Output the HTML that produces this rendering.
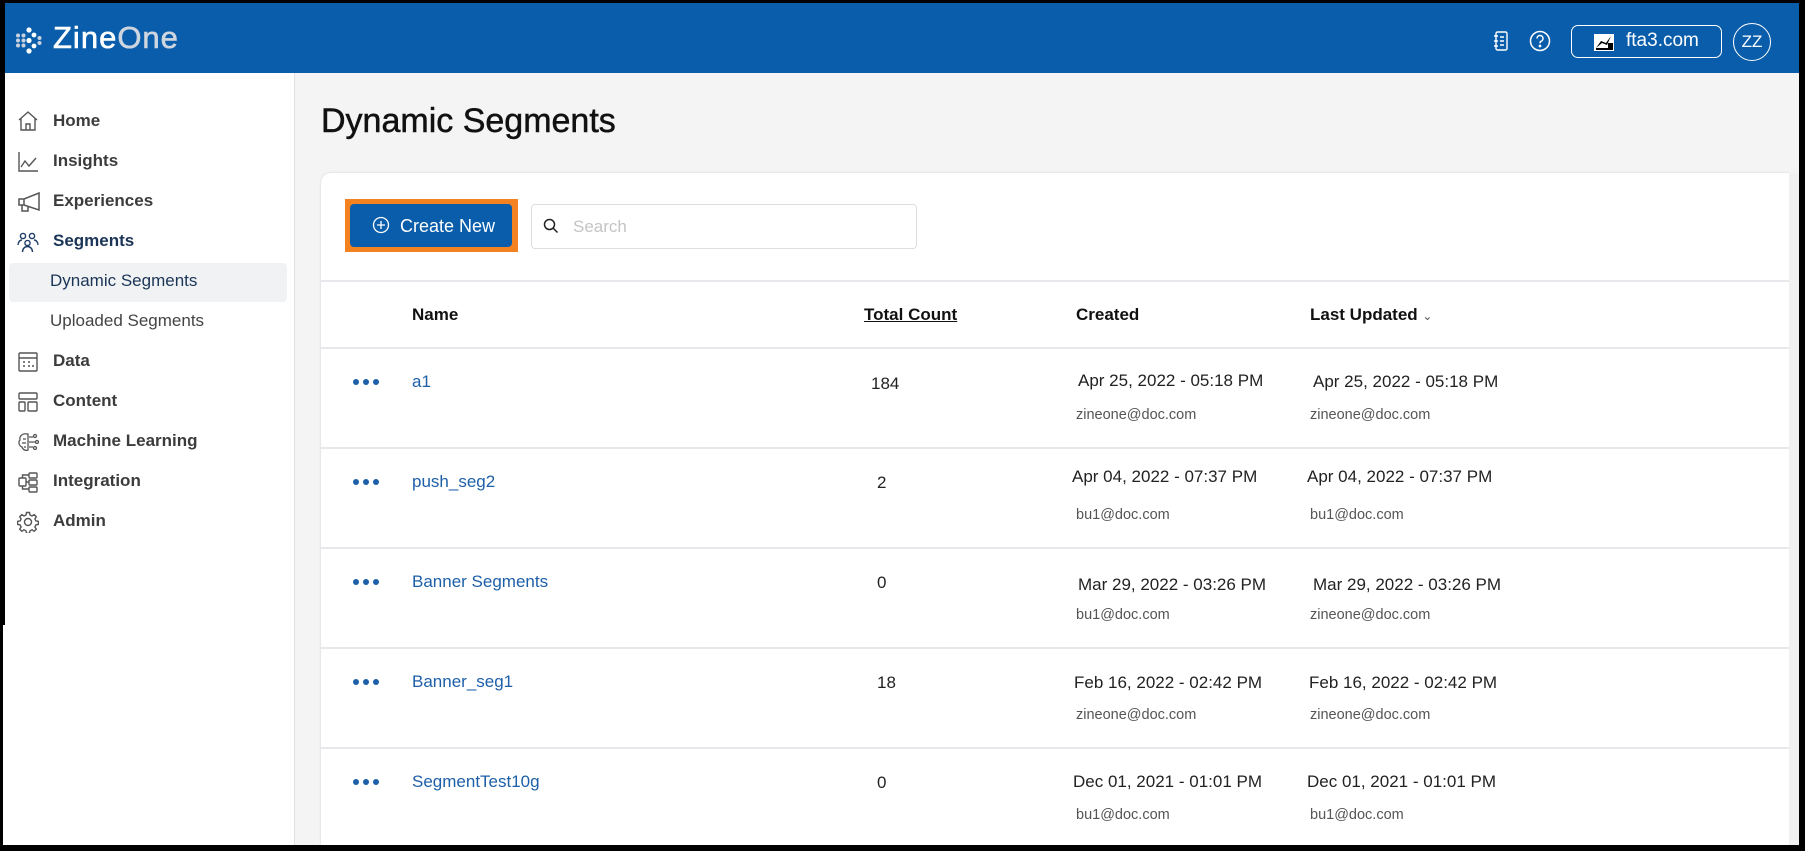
<!DOCTYPE html>
<html><head><meta charset="utf-8"><style>
*{box-sizing:border-box;margin:0;padding:0}
html,body{width:1805px;height:851px;overflow:hidden;background:#fff;font-family:"Liberation Sans",Arial,sans-serif}
.abs{position:absolute}
#hdr{left:0;top:0;width:1805px;height:73px;background:#0a5dab}
#side{left:0;top:73px;width:295px;height:778px;background:#fff;border-right:1px solid #e2e2e2}
#main{left:295px;top:73px;width:1510px;height:778px;background:#f4f4f4}
.nav{position:absolute;left:53px;font-size:17px;font-weight:bold;color:#3c3c3c}
.ic{position:absolute;left:17px;width:22px;height:22px}
.sub{position:absolute;left:50px;font-size:17px;color:#444}
#card{left:321px;top:173px;width:1468px;height:672px;background:#fff;border-radius:10px 0 0 0;box-shadow:0 0 2px rgba(0,0,0,.15)}
.hline{position:absolute;left:321px;width:1468px;height:2px;background:#e6e8ec}
.th{position:absolute;top:305px;font-size:17px;font-weight:bold;color:#111}
.cell{position:absolute;font-size:17px;color:#222}
.nm{position:absolute;left:412px;font-size:17px;color:#1d5fa8}
.em{position:absolute;font-size:14.5px;color:#555}
.dots{position:absolute;left:353px;width:26px;height:6px}
.dots i{position:absolute;top:0;width:6px;height:6px;border-radius:3px;background:#1d5fa8}
</style></head><body>
<div id="hdr" class="abs">
 <svg class="abs" style="left:15px;top:27px" width="28" height="27" viewBox="0 0 28 27">
  <g fill="#fff"><circle cx="14" cy="3" r="2.6"/><circle cx="19" cy="8" r="2.4"/><circle cx="14" cy="13.5" r="2.6"/><circle cx="19" cy="19" r="2.4"/><circle cx="14" cy="24" r="2.6"/></g>
  <g fill="#c9d3e0"><circle cx="3" cy="8.5" r="2"/><circle cx="8.5" cy="8.5" r="2"/><circle cx="3" cy="13.5" r="2"/><circle cx="8.5" cy="13.5" r="2"/><circle cx="3" cy="18.5" r="2"/><circle cx="8.5" cy="18.5" r="2"/><circle cx="24.5" cy="11" r="2"/><circle cx="24.5" cy="16" r="2"/></g>
 </svg>
 <div class="abs" style="left:53px;top:20px;font-size:31px;color:#fff;letter-spacing:1px;-webkit-text-stroke:0.6px #fff">Zine<span style="color:#cfd6df;-webkit-text-stroke:0.6px #cfd6df">One</span></div>
 <svg class="abs" style="left:1493px;top:31px" width="16" height="20" viewBox="0 0 16 20" fill="none" stroke="#fff" stroke-width="1.4"><rect x="3" y="1" width="11" height="18" rx="1.5"/><path d="M1 5h4M1 10h4M1 15h4M7 6h4M7 10h4M7 14h4"/></svg>
 <svg class="abs" style="left:1529px;top:30px" width="22" height="22" viewBox="0 0 22 22" fill="none" stroke="#fff" stroke-width="1.5"><circle cx="11" cy="11" r="9.5"/><path d="M8 8.5a3 3 0 1 1 4 2.8c-.8.4-1 1-1 1.9"/><circle cx="11" cy="16" r=".6" fill="#fff"/></svg>
 <div class="abs" style="left:1571px;top:25px;width:151px;height:33px;border:1.5px solid #fff;border-radius:7px"></div>
 <div class="abs" style="left:1594px;top:34px;width:20px;height:17px;background:#fff"><svg width="20" height="17" viewBox="0 0 20 17"><path d="M2 14l5-7 5 2 5-7-4 9-5-2z" fill="#000"/><rect x="14" y="9" width="5" height="7" fill="#000"/><path d="M2 15h12" stroke="#000" stroke-width="2"/></svg></div>
 <div class="abs" style="left:1626px;top:30px;font-size:19px;color:#fff">fta3.com</div>
 <div class="abs" style="left:1733px;top:23px;width:38px;height:38px;border:1.5px solid #fff;border-radius:50%;color:#fff;font-size:17px;text-align:center;line-height:35px">ZZ</div>
</div>
<div class="abs" style="left:0;top:0;width:1805px;height:3px;background:#000"></div>
<div id="side" class="abs">
 <div class="abs" style="left:9px;top:190px;width:278px;height:39px;background:#f1f2f4;border-radius:4px"></div>
</div>
<svg class="ic" style="top:110px" viewBox="0 0 22 22" fill="none" stroke="#555" stroke-width="1.4"><path d="M2 10L11 2l9 8M4 8.5V20h14V8.5M9 20v-6h4v6"/></svg>
<div class="nav" style="top:111px">Home</div>
<svg class="ic" style="top:151px" viewBox="0 0 22 22" fill="none" stroke="#555" stroke-width="1.4"><path d="M2 1v19h19M4 16l4-6 4 5 7-8"/></svg>
<div class="nav" style="top:151px">Insights</div>
<svg class="ic" style="top:191px;width:25px" viewBox="0 0 25 22" fill="none" stroke="#555" stroke-width="1.5"><path d="M2 8h5l15-6v17L7 14H2zM7 8v6M5 14v6h6v-4"/></svg>
<div class="nav" style="top:191px">Experiences</div>
<svg class="ic" style="top:231px" viewBox="0 0 22 22" fill="none" stroke="#1d3d66" stroke-width="1.4"><circle cx="6" cy="5" r="2.6"/><circle cx="15" cy="5" r="2.6"/><circle cx="10.5" cy="12" r="2.6"/><path d="M1 14c0-3 2-5 4-5M21 14c0-3-2-5-4-5M5.5 21c0-3 2-5.5 5-5.5s5 2.5 5 5.5"/></svg>
<div class="nav" style="top:231px;color:#1b3557">Segments</div>
<div class="sub" style="top:271px;color:#1b3557">Dynamic Segments</div>
<div class="sub" style="top:311px">Uploaded Segments</div>
<svg class="ic" style="top:351px" viewBox="0 0 22 22" fill="none" stroke="#555" stroke-width="1.4"><rect x="2" y="2" width="18" height="18" rx="1"/><path d="M2 7h18M6 11h2M11 11h2M6 15h2M11 15h2M15 15h2"/></svg>
<div class="nav" style="top:351px">Data</div>
<svg class="ic" style="top:391px" viewBox="0 0 22 22" fill="none" stroke="#555" stroke-width="1.4"><rect x="2" y="2" width="18" height="6" rx="1"/><rect x="2" y="11" width="6" height="9" rx="1"/><rect x="11" y="11" width="9" height="9" rx="1"/></svg>
<div class="nav" style="top:391px">Content</div>
<svg class="ic" style="top:431px" viewBox="0 0 22 22" fill="none" stroke="#555" stroke-width="1.3"><path d="M10 3C6 2 2 5 3 9c-2 2-1 6 2 7 1 3 4 4 6 3V3zM6 8h3M5 12h4M7 16h2"/><path d="M12 6h4M12 11h6M12 16h4"/><circle cx="18" cy="5" r="1.5"/><circle cx="20" cy="11" r="1.5"/><circle cx="18" cy="17" r="1.5"/></svg>
<div class="nav" style="top:431px">Machine Learning</div>
<svg class="ic" style="top:471px" viewBox="0 0 22 22" fill="none" stroke="#555" stroke-width="1.4"><rect x="2" y="7" width="7" height="8" rx="1"/><rect x="12" y="2" width="8" height="5" rx="1"/><rect x="12" y="9" width="8" height="5" rx="1"/><rect x="12" y="16" width="8" height="5" rx="1"/><path d="M9 11h3M5.5 7V4h6M5.5 15v3h6"/></svg>
<div class="nav" style="top:471px">Integration</div>
<svg class="ic" style="top:511px" viewBox="0 0 22 22" fill="none" stroke="#555" stroke-width="1.4"><circle cx="11" cy="11" r="3.5"/><path d="M9.5 1.5h3l.5 2.5 2 1 2.2-1.4 2.1 2.1-1.4 2.2 1 2 2.5.5v3l-2.5.5-1 2 1.4 2.2-2.1 2.1-2.2-1.4-2 1-.5 2.5h-3l-.5-2.5-2-1-2.2 1.4-2.1-2.1 1.4-2.2-1-2-2.5-.5v-3l2.5-.5 1-2-1.4-2.2 2.1-2.1 2.2 1.4 2-1z"/></svg>
<div class="nav" style="top:511px">Admin</div>

<div id="main" class="abs"></div>
<div class="abs" style="left:321px;top:102px;font-size:34px;color:#111;-webkit-text-stroke:0.5px #111">Dynamic Segments</div>
<div id="card" class="abs"></div>
<div class="abs" style="left:1789px;top:173px;width:10px;height:672px;background:#f0f0f0"></div>
<div class="abs" style="left:345px;top:199px;width:173px;height:53px;background:#f58220"></div>
<div class="abs" style="left:350px;top:204px;width:162px;height:43px;background:#0a5dab;border-radius:4px"></div>
<svg class="abs" style="left:372px;top:216px" width="18" height="18" viewBox="0 0 18 18" fill="none" stroke="#fff" stroke-width="1.3"><circle cx="9" cy="9" r="7.5"/><path d="M9 5v8M5 9h8"/></svg>
<div class="abs" style="left:400px;top:216px;font-size:18px;color:#fff">Create New</div>
<div class="abs" style="left:531px;top:204px;width:386px;height:45px;border:1px solid #dedede;border-radius:4px;background:#fff"></div>
<svg class="abs" style="left:543px;top:218px" width="16" height="16" viewBox="0 0 16 16" fill="none" stroke="#222" stroke-width="1.5"><circle cx="6.5" cy="6.5" r="5"/><path d="M10 10l4.5 4.5"/></svg>
<div class="abs" style="left:573px;top:217px;font-size:17px;color:#c4c4c4">Search</div>
<div class="hline" style="top:280px"></div>

<div class="th" style="left:412px">Name</div>
<div class="th" style="left:864px;text-decoration:underline">Total Count</div>
<div class="th" style="left:1076px">Created</div>
<div class="th" style="left:1310px">Last Updated <span style="font-weight:normal;font-size:12px;color:#555">&#8964;</span></div>
<div class="hline" style="top:347px"></div>

<div class="dots" style="top:379px"><i style="left:0"></i><i style="left:10px"></i><i style="left:20px"></i></div>
<div class="nm" style="top:372px">a1</div>
<div class="cell" style="left:871px;top:374px">184</div>
<div class="cell" style="left:1078px;top:371px">Apr 25, 2022 - 05:18 PM</div>
<div class="cell" style="left:1313px;top:372px">Apr 25, 2022 - 05:18 PM</div>
<div class="em" style="left:1076px;top:407px">zineone@doc.com</div>
<div class="em" style="left:1310px;top:407px">zineone@doc.com</div>
<div class="hline" style="top:447px"></div>

<div class="dots" style="top:479px"><i style="left:0"></i><i style="left:10px"></i><i style="left:20px"></i></div>
<div class="nm" style="top:472px">push_seg2</div>
<div class="cell" style="left:877px;top:473px">2</div>
<div class="cell" style="left:1072px;top:467px">Apr 04, 2022 - 07:37 PM</div>
<div class="cell" style="left:1307px;top:467px">Apr 04, 2022 - 07:37 PM</div>
<div class="em" style="left:1076px;top:507px">bu1@doc.com</div>
<div class="em" style="left:1310px;top:507px">bu1@doc.com</div>
<div class="hline" style="top:547px"></div>

<div class="dots" style="top:579px"><i style="left:0"></i><i style="left:10px"></i><i style="left:20px"></i></div>
<div class="nm" style="top:572px">Banner Segments</div>
<div class="cell" style="left:877px;top:573px">0</div>
<div class="cell" style="left:1078px;top:575px">Mar 29, 2022 - 03:26 PM</div>
<div class="cell" style="left:1313px;top:575px">Mar 29, 2022 - 03:26 PM</div>
<div class="em" style="left:1076px;top:607px">bu1@doc.com</div>
<div class="em" style="left:1310px;top:607px">zineone@doc.com</div>
<div class="hline" style="top:647px"></div>

<div class="dots" style="top:679px"><i style="left:0"></i><i style="left:10px"></i><i style="left:20px"></i></div>
<div class="nm" style="top:672px">Banner_seg1</div>
<div class="cell" style="left:877px;top:673px">18</div>
<div class="cell" style="left:1074px;top:673px">Feb 16, 2022 - 02:42 PM</div>
<div class="cell" style="left:1309px;top:673px">Feb 16, 2022 - 02:42 PM</div>
<div class="em" style="left:1076px;top:707px">zineone@doc.com</div>
<div class="em" style="left:1310px;top:707px">zineone@doc.com</div>
<div class="hline" style="top:747px"></div>

<div class="dots" style="top:779px"><i style="left:0"></i><i style="left:10px"></i><i style="left:20px"></i></div>
<div class="nm" style="top:772px">SegmentTest10g</div>
<div class="cell" style="left:877px;top:773px">0</div>
<div class="cell" style="left:1073px;top:772px">Dec 01, 2021 - 01:01 PM</div>
<div class="cell" style="left:1307px;top:772px">Dec 01, 2021 - 01:01 PM</div>
<div class="em" style="left:1076px;top:807px">bu1@doc.com</div>
<div class="em" style="left:1310px;top:807px">bu1@doc.com</div>

<div class="abs" style="left:0;top:0;width:5px;height:625px;background:#000"></div>
<div class="abs" style="left:0;top:625px;width:3px;height:226px;background:#000"></div>
<div class="abs" style="left:1799px;top:0;width:6px;height:851px;background:#000"></div>
<div class="abs" style="left:0;top:845px;width:1805px;height:6px;background:#000"></div>
</body></html>
